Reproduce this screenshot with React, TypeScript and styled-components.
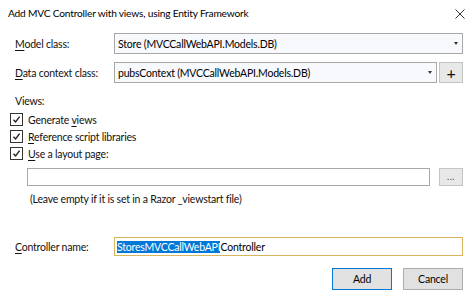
import React from 'react';
import styled, {createGlobalStyle} from 'styled-components';

const GlobalStyle = createGlobalStyle`
  html, body {
    margin: 0;
    padding: 0;
    background: #ffffff;
  }
  body {
    font-family: Lato, 'Noto Sans', sans-serif;
    font-size: 10.5px;
    letter-spacing: -0.2px;
    color: #111;
  }
`;

const Dialog = styled.div`
  width: 474px;
  height: 296px;
  box-sizing: border-box;
  background: #ffffff;
  display: flex;
  flex-direction: column;
  overflow: hidden;
`;

const TitleBar = styled.div`
  height: 26px;
  display: flex;
  align-items: center;
  justify-content: space-between;
  padding: 0 9px 0 8px;
`;

const Title = styled.span`
  font-size: 10.2px;
  color: #000;
`;

const Close = styled.svg`
  width: 10px;
  height: 10px;
  margin-top: 1px;
`;

const Body = styled.div`
  display: flex;
  flex-direction: column;
  padding: 7px 11px 0 15px;
`;

const FieldRow = styled.div<{$mt?: number}>`
  display: flex;
  align-items: center;
  margin-top: ${p => p.$mt ?? 0}px;
`;

const Label = styled.span`
  width: 99px;
  flex: none;
  white-space: nowrap;
`;

const Key = styled.span`
  text-decoration: underline;
  text-underline-offset: 2px;
`;

const Combo = styled.div`
  flex: 1;
  height: 21px;
  box-sizing: border-box;
  border: 1px solid #a8a8a8;
  background: #f7f9fd;
  display: flex;
  align-items: center;
  padding: 0 4px 0 3px;
  color: #000;
`;

const ComboText = styled.span`
  flex: 1;
`;

const Arrow = styled.span`
  width: 0;
  height: 0;
  border-left: 2px solid transparent;
  border-right: 2px solid transparent;
  border-top: 3px solid #333;
`;

const SmallButton = styled.div<{$h: number}>`
  width: 24px;
  height: ${p => p.$h}px;
  box-sizing: border-box;
  margin-left: 2px;
  border: 1px solid #c4c4c4;
  background: #e8e8e8;
  display: flex;
  align-items: center;
  justify-content: center;
  color: #111;
  font-size: 16px;
  line-height: 1;
`;

const Dots = styled.span`
  font-size: 9px;
  color: #444;
  letter-spacing: 0.5px;
  margin-top: -2px;
`;

const SectionLabel = styled.div`
  margin-top: 10px;
  height: 16px;
  line-height: 16px;
`;

const CheckRow = styled.label`
  display: flex;
  align-items: center;
  margin-left: -5px;
  margin-top: 4px;
  height: 13px;
`;

const Box = styled.span`
  width: 13px;
  height: 13px;
  box-sizing: border-box;
  border: 1px solid #333;
  background: #fff;
  display: flex;
  align-items: center;
  justify-content: center;
  margin-right: 5px;
`;

const PathRow = styled.div`
  display: flex;
  align-items: center;
  margin-top: 8px;
  margin-left: 12px;
`;

const TextBox = styled.div`
  flex: 1;
  height: 18px;
  box-sizing: border-box;
  border: 1px solid #a8a8a8;
  background: #fff;
  margin-right: 7px;
`;

const Note = styled.div`
  margin-top: 5px;
  margin-left: 15px;
  height: 16px;
  line-height: 16px;
`;

const NameBox = styled.div`
  flex: 1;
  height: 19px;
  box-sizing: border-box;
  border: 1px solid #d8b45c;
  background: #fff;
  display: flex;
  align-items: center;
  padding-left: 2px;
  color: #000;
`;

const Selected = styled.span`
  background: #0078d7;
  color: #fff;
`;

const Footer = styled.div`
  display: flex;
  justify-content: flex-end;
  gap: 11px;
  margin-top: 12px;
`;

const Button = styled.div<{$default?: boolean}>`
  width: 60px;
  height: 22px;
  box-sizing: border-box;
  border: 1px solid ${p => (p.$default ? '#0078d7' : '#adadad')};
  background: #e1e1e1;
  display: flex;
  align-items: center;
  justify-content: center;
  color: #000;
`;

const Check = () => (
  <Box>
    <svg width="9" height="9" viewBox="0 0 9 9">
      <path d="M1.5 4.8 L3.6 7 L7.6 1.6" fill="none" stroke="#222" strokeWidth="1.4" />
    </svg>
  </Box>
);

export default function App() {
  return (
    <Dialog>
      <GlobalStyle />
      <TitleBar>
        <Title>Add MVC Controller with views, using Entity Framework</Title>
        <Close viewBox="0 0 10 10">
          <path d="M0.5 0.5 L9.5 9.5 M9.5 0.5 L0.5 9.5" stroke="#333" strokeWidth="1" />
        </Close>
      </TitleBar>
      <Body>
        <FieldRow>
          <Label>
            <Key>M</Key>odel class:
          </Label>
          <Combo>
            <ComboText>Store (MVCCallWebAPI.Models.DB)</ComboText>
            <Arrow />
          </Combo>
        </FieldRow>
        <FieldRow $mt={8}>
          <Label>
            <Key>D</Key>ata context class:
          </Label>
          <Combo>
            <ComboText>pubsContext (MVCCallWebAPI.Models.DB)</ComboText>
            <Arrow />
          </Combo>
          <SmallButton $h={21}>+</SmallButton>
        </FieldRow>
        <SectionLabel>Views:</SectionLabel>
        <CheckRow>
          <Check />
          <span>
            Generate <Key>v</Key>iews
          </span>
        </CheckRow>
        <CheckRow>
          <Check />
          <span>
            <Key>R</Key>eference script libraries
          </span>
        </CheckRow>
        <CheckRow>
          <Check />
          <span>
            <Key>U</Key>se a layout page:
          </span>
        </CheckRow>
        <PathRow>
          <TextBox />
          <SmallButton $h={18}>
            <Dots>...</Dots>
          </SmallButton>
        </PathRow>
        <Note>(Leave empty if it is set in a Razor _viewstart file)</Note>
        <FieldRow $mt={30}>
          <Label>
            <Key>C</Key>ontroller name:
          </Label>
          <NameBox>
            <Selected>StoresMVCCallWebAPI</Selected>Controller
          </NameBox>
        </FieldRow>
        <Footer>
          <Button $default>Add</Button>
          <Button>Cancel</Button>
        </Footer>
      </Body>
    </Dialog>
  );
}
